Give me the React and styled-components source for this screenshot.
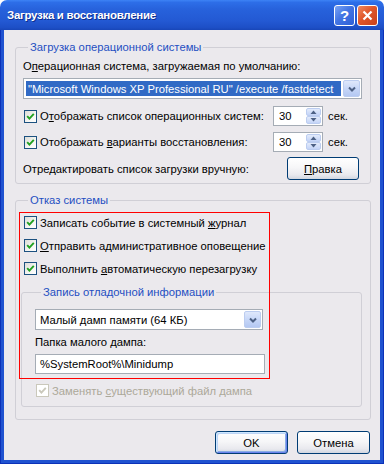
import React from 'react';
import styled, { createGlobalStyle } from 'styled-components';

const GlobalStyle = createGlobalStyle`
  html, body {
    margin: 0;
    padding: 0;
    background: #fff;
  }
  body {
    font-family: "Liberation Sans", Arial, sans-serif;
    font-size: 11.25px;
    color: #000;
  }
`;

const Window = styled.div`
  width: 384px;
  height: 464px;
  display: flex;
  flex-direction: column;
`;

const TitleBar = styled.div`
  height: 30px;
  flex: none;
  display: flex;
  align-items: center;
  padding: 0 6px 0 7px;
  border-radius: 7px 7px 0 0;
  background: linear-gradient(
    to bottom,
    #3d83f5 0%,
    #2d6ee8 8%,
    #2762dc 30%,
    #2359d3 70%,
    #1d4fc6 92%,
    #1846b8 100%
  );
`;

const Title = styled.div`
  flex: 1;
  color: #fff;
  font-weight: bold;
  font-size: 11.5px;
  letter-spacing: -0.3px;
  text-shadow: 1px 1px 0 #0f2f8c;
  white-space: nowrap;
`;

const CaptionButton = styled.span`
  width: 21px;
  height: 21px;
  box-sizing: border-box;
  margin-left: 2px;
  border: 1px solid #fff;
  border-radius: 3px;
  display: flex;
  align-items: center;
  justify-content: center;
  color: #fff;
  font-weight: bold;
  font-size: 15px;
  background: ${p =>
    p.$close
      ? 'linear-gradient(135deg, #f08a60 0%, #e0562a 45%, #c9411b 100%)'
      : 'linear-gradient(135deg, #7ba4f4 0%, #4375e4 45%, #2c5ed6 100%)'};
`;

const Frame = styled.div`
  flex: 1;
  display: flex;
  min-height: 0;
  background: #1f52d0;
  padding: 0 4px 4px;
  box-shadow: inset 1px 0 0 #0b31b8, inset -1px 0 0 #0b31b8, inset 0 -1px 0 #0b31b8;
`;

const Client = styled.div`
  flex: 1;
  background: #ebe9ed;
  padding: 11px 9px 0 11px;
  display: flex;
  flex-direction: column;
`;

const Group = styled.fieldset`
  margin: ${p => p.$mt || 0}px 0 0 ${p => p.$ml || 0}px;
  padding: 0 ${p => p.$pr}px ${p => p.$pb}px ${p => p.$pl}px;
  border: 1px solid #d0cfd6;
  border-radius: 3px;
  min-width: 0;
`;

const Legend = styled.legend`
  margin-left: ${p => p.$ml || 5}px;
  padding: 0 2px;
  line-height: 13px;
  color: #1f4fc2;
`;

const Body = styled.div`
  position: relative;
  display: flex;
  flex-direction: column;
`;

const Label = styled.div`
  height: 13px;
  line-height: 13px;
  margin-top: ${p => p.$mt || 0}px;
  white-space: nowrap;
`;

const Row = styled.div`
  display: flex;
  align-items: center;
  height: ${p => p.$h}px;
  margin-top: ${p => p.$mt || 0}px;
  margin-left: ${p => p.$ml || 0}px;
  color: ${p => (p.$disabled ? '#aca899' : '#000')};
  white-space: nowrap;
`;

const RowText = styled.span`
  flex: 1;
  margin-left: ${p => (p.$flush ? 0 : 3)}px;
`;

const Box = styled.span`
  width: 13px;
  height: 13px;
  box-sizing: border-box;
  flex: none;
  display: flex;
  align-items: center;
  justify-content: center;
  border: 1px solid ${p => (p.$disabled ? '#cac8bb' : '#1c5180')};
  background: ${p =>
    p.$disabled ? '#fff' : 'linear-gradient(135deg, #dcdcd7 0%, #f6f6f3 60%, #fff 100%)'};
`;

const Select = styled.div`
  width: ${p => p.$w};
  height: 21px;
  box-sizing: border-box;
  border: 1px solid #a5acb5;
  background: #fff;
  display: flex;
  padding: 1px;
  margin-top: ${p => p.$mt || 0}px;
`;

const SelectValue = styled.div`
  flex: 1;
  display: flex;
  align-items: center;
  padding-left: 2px;
  margin: 1px 2px 1px 1px;
  white-space: nowrap;
  overflow: hidden;
  background: ${p => (p.$selected ? '#316ac5' : 'transparent')};
  color: ${p => (p.$selected ? '#fff' : '#000')};
`;

const DropButton = styled.span`
  width: 17px;
  box-sizing: border-box;
  border: 1px solid #bccdf0;
  border-radius: 2px;
  background: linear-gradient(to bottom, #dfe8fb 0%, #c7d7f8 50%, #b4c8f2 100%);
  display: flex;
  align-items: center;
  justify-content: center;
`;

const Spin = styled.div`
  width: 50px;
  height: 20px;
  box-sizing: border-box;
  border: 1px solid #a5acb5;
  background: #fff;
  display: flex;
  padding: 1px;
`;

const SpinValue = styled.span`
  flex: 1;
  display: flex;
  align-items: center;
  padding-left: 4px;
`;

const SpinButtons = styled.div`
  width: 15px;
  display: flex;
  flex-direction: column;
`;

const SpinButton = styled.span`
  flex: 1;
  box-sizing: border-box;
  border: 1px solid #bccdf0;
  border-radius: 2px;
  background: linear-gradient(to bottom, #e3ebfb 0%, #c4d4f7 100%);
  display: flex;
  align-items: center;
  justify-content: center;
`;

const Unit = styled.span`
  width: 39px;
  box-sizing: border-box;
  padding-left: 5px;
`;

const TextField = styled.div`
  width: ${p => p.$w};
  height: 20px;
  box-sizing: border-box;
  border: 1px solid #a5acb5;
  background: #fff;
  display: flex;
  align-items: center;
  padding-left: 4px;
  margin-top: ${p => p.$mt || 0}px;
`;

const Button = styled.button`
  width: ${p => p.$w || 73}px;
  height: 23px;
  box-sizing: border-box;
  padding: 0;
  margin-left: ${p => p.$ml || 0}px;
  margin-right: ${p => p.$mr || 0}px;
  border: 1px solid #003c74;
  border-radius: 3px;
  font: inherit;
  color: #000;
  background: linear-gradient(to bottom, #ffffff 0%, #f6f6f8 45%, #e9e9ee 80%, #d2d6e0 100%);
  box-shadow: ${p =>
    p.$default
      ? 'inset 1px 1px 0 #cee7ff, inset -1px -1px 0 #6982ee, inset 2px 2px 0 #bcd4f6, inset -2px -2px 0 #89ade4'
      : 'none'};
`;

const Highlight = styled.div`
  position: absolute;
  left: -5px;
  top: 5px;
  width: 251px;
  height: 167px;
  box-sizing: border-box;
  border: 1px solid #f00;
  pointer-events: none;
`;

const Footer = styled.div`
  display: flex;
  justify-content: flex-end;
  margin-top: 11px;
  padding-right: 1px;
`;

const Check = ({ disabled }) => (
  <Box $disabled={disabled}>
    <svg width="9" height="9" viewBox="0 0 9 9">
      <polyline
        points="1.2,4.2 3.4,6.6 7.8,1.8"
        fill="none"
        stroke={disabled ? '#cac8bb' : '#21a121'}
        strokeWidth="1.9"
      />
    </svg>
  </Box>
);

const Chevron = () => (
  <svg width="8" height="6" viewBox="0 0 8 6">
    <polyline points="1,1.5 4,4.5 7,1.5" fill="none" stroke="#4d6185" strokeWidth="2" />
  </svg>
);

const Arrow = ({ up }) => (
  <svg width="7" height="4" viewBox="0 0 7 4">
    <polygon points={up ? '0.5,4 3.5,0.5 6.5,4' : '0.5,0 3.5,3.5 6.5,0'} fill="#4d6185" />
  </svg>
);

const Spinner = ({ value }) => (
  <Spin>
    <SpinValue>{value}</SpinValue>
    <SpinButtons>
      <SpinButton><Arrow up /></SpinButton>
      <SpinButton><Arrow /></SpinButton>
    </SpinButtons>
  </Spin>
);

export default function App() {
  return (
    <>
      <GlobalStyle />
      <Window>
        <TitleBar>
          <Title>Загрузка и восстановление</Title>
          <CaptionButton>?</CaptionButton>
          <CaptionButton $close>
            <svg width="11" height="11" viewBox="0 0 11 11">
              <path d="M1.5 1.5 L9.5 9.5 M9.5 1.5 L1.5 9.5" stroke="#fff" strokeWidth="2.2" />
            </svg>
          </CaptionButton>
        </TitleBar>
        <Frame>
          <Client>
            <Group $pl={7} $pr={8} $pb={3}>
              <Legend>Загрузка операционной системы</Legend>
              <Body>
                <Label $mt={6}>
                  О<u>п</u>ерационная система, загружаемая по умолчанию:
                </Label>
                <Select $w="100%" $mt={5}>
                  <SelectValue $selected>
                    "Microsoft Windows XP Professional RU" /execute /fastdetect
                  </SelectValue>
                  <DropButton><Chevron /></DropButton>
                </Select>
                <Row $h={20} $mt={7} $ml={1}>
                  <Check />
                  <RowText>
                    О<u>т</u>ображать список операционных систем:
                  </RowText>
                  <Spinner value="30" />
                  <Unit>сек.</Unit>
                </Row>
                <Row $h={20} $mt={6} $ml={1}>
                  <Check />
                  <RowText>
                    Отображать <u>в</u>арианты восстановления:
                  </RowText>
                  <Spinner value="30" />
                  <Unit>сек.</Unit>
                </Row>
                <Row $h={23} $mt={5}>
                  <RowText $flush>Отредактировать список загрузки вручную:</RowText>
                  <Button $w={72} $mr={3}>
                    <u>П</u>равка
                  </Button>
                </Row>
              </Body>
            </Group>

            <Group $mt={10} $pl={8} $pr={8} $pb={12}>
              <Legend $ml={4}>Отказ системы</Legend>
              <Body>
                <Highlight />
                <Row $h={17} $mt={7}>
                  <Check />
                  <RowText>
                    Записать событие в системный <u>ж</u>урнал
                  </RowText>
                </Row>
                <Row $h={17} $mt={6}>
                  <Check />
                  <RowText>
                    <u>О</u>тправить административное оповещение
                  </RowText>
                </Row>
                <Row $h={17} $mt={6}>
                  <Check />
                  <RowText>
                    Выполнить <u>а</u>втоматическую перезагрузку
                  </RowText>
                </Row>
                <Group $mt={9} $ml={-3} $pl={13} $pr={8} $pb={7}>
                  <Legend $ml={6}>Запись отладочной информации</Legend>
                  <Body>
                    <Select $w="228px" $mt={10}>
                      <SelectValue>Малый дамп памяти (64 КБ)</SelectValue>
                      <DropButton><Chevron /></DropButton>
                    </Select>
                    <Label $mt={6}>Папка малого дампа:</Label>
                    <TextField $w="230px" $mt={5}>%SystemRoot%\Minidump</TextField>
                    <Row $h={17} $mt={8} $ml={1} $disabled>
                      <Check disabled />
                      <RowText>
                        Заменять <u>с</u>уществующий файл дампа
                      </RowText>
                    </Row>
                  </Body>
                </Group>
              </Body>
            </Group>

            <Footer>
              <Button $default>OK</Button>
              <Button $ml={9}>Отмена</Button>
            </Footer>
          </Client>
        </Frame>
      </Window>
    </>
  );
}
